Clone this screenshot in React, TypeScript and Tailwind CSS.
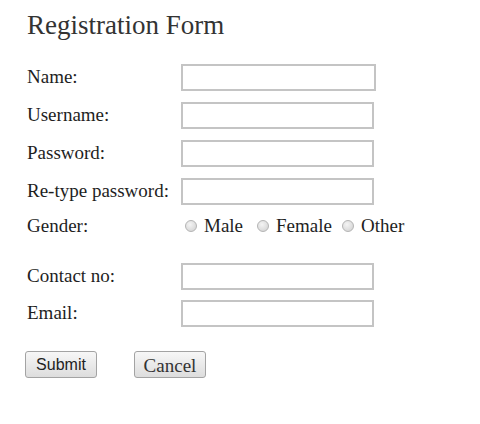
import React from 'react';

const serif = "font-['Liberation_Serif','Times_New_Roman',serif]";

const Field = ({ label, wide = false }: { label: string; wide?: boolean }) => (
  <div className="flex items-center h-[27px]">
    <label className="w-[154px] text-[19px] text-[#1e1e1e]">{label}</label>
    <input
      type="text"
      className={`${wide ? 'w-[195px]' : 'w-[193px]'} h-[27px] border-2 border-[#c4c4c4] bg-white outline-none`}
    />
  </div>
);

const Radio = ({ label, className = '' }: { label: string; className?: string }) => (
  <label className={`flex items-center ${className}`}>
    <span className="w-[12px] h-[12px] rounded-full border border-[#b4b4b4] bg-[radial-gradient(circle_at_40%_35%,#f4f4f4,#cfcfcf)]" />
    <span className="ml-[7px] text-[19px] text-[#1e1e1e]">{label}</span>
  </label>
);

export default function App() {
  return (
    <div className={`${serif} bg-white w-[480px] h-[424px] pl-[27px] pt-[12px]`}>
      <h1 className="text-[27px] leading-[27px] text-[#333]">Registration Form</h1>

      <div className="mt-[25px] flex flex-col gap-[11px]">
        <Field label="Name:" wide />
        <Field label="Username:" />
        <Field label="Password:" />
        <Field label="Re-type password:" />
      </div>

      <div className="mt-[11px] flex items-center h-[20px]">
        <span className="w-[158px] text-[19px] text-[#1e1e1e]">Gender:</span>
        <Radio label="Male" />
        <Radio label="Female" className="ml-[14px]" />
        <Radio label="Other" className="ml-[10px]" />
      </div>

      <div className="mt-[27px] flex flex-col gap-[10px]">
        <Field label="Contact no:" />
        <Field label="Email:" />
      </div>

      <div className="mt-[24px] flex gap-[37px] -ml-[2px]">
        <button className="w-[72px] h-[27px] rounded-[3px] border border-[#a3a3a3] bg-[linear-gradient(#f7f7f7,#dddddd)] font-['Liberation_Sans',Arial,sans-serif] text-[16px] text-[#222]">
          Submit
        </button>
        <button className="w-[72px] h-[27px] rounded-[3px] border border-[#a3a3a3] bg-[linear-gradient(#f7f7f7,#dddddd)] text-[19px] text-[#333]">
          Cancel
        </button>
      </div>
    </div>
  );
}
